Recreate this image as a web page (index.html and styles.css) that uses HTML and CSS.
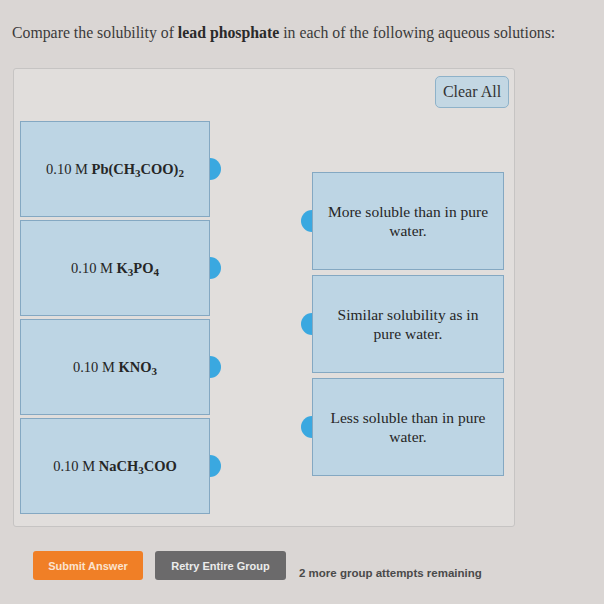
FILE: index.html
```html
<!DOCTYPE html>
<html>
<head>
<meta charset="utf-8">
<link rel="stylesheet" href="styles.css">
</head>
<body>
<div class="page">
  <p class="prompt">Compare the solubility of <b>lead phosphate</b> in each of the following aqueous solutions:</p>
  <div class="panel">
    <div class="toolbar"><button class="clear">Clear All</button></div>
    <div class="columns">
      <div class="col left">
        <div class="item"><span>0.10 M <b>Pb(CH<sub>3</sub>COO)<sub>2</sub></b></span><i class="tab tab-r"></i></div>
        <div class="item"><span>0.10 M <b>K<sub>3</sub>PO<sub>4</sub></b></span><i class="tab tab-r"></i></div>
        <div class="item"><span>0.10 M <b>KNO<sub>3</sub></b></span><i class="tab tab-r"></i></div>
        <div class="item"><span>0.10 M <b>NaCH<sub>3</sub>COO</b></span><i class="tab tab-r"></i></div>
      </div>
      <div class="col right">
        <div class="target"><i class="tab tab-l"></i><span>More soluble than in pure water.</span></div>
        <div class="target"><i class="tab tab-l"></i><span>Similar solubility as in pure water.</span></div>
        <div class="target"><i class="tab tab-l"></i><span>Less soluble than in pure water.</span></div>
      </div>
    </div>
  </div>
  <div class="actions">
    <button class="btn submit">Submit Answer</button>
    <button class="btn retry">Retry Entire Group</button>
    <span class="note">2 more group attempts remaining</span>
  </div>
</div>
</body>
</html>
```
FILE: styles.css
```css
html, body {
  margin: 0;
  padding: 0;
  background: #dad6d4;
}
.page {
  width: 604px;
  height: 604px;
  overflow: hidden;
  font-family: "Liberation Serif", "Times New Roman", serif;
  color: #333;
}
.prompt {
  margin: 0;
  padding: 23px 0 0 12px;
  font-size: 15.8px;
  line-height: 20px;
  color: #3a3a3a;
}
.prompt b { color: #2a2a2a; }
.panel {
  margin: 25px 0 0 13px;
  width: 502px;
  height: 459px;
  border: 1px solid #c6c4c3;
  border-radius: 3px;
  background: #e1dedc;
  box-sizing: border-box;
}
.toolbar {
  display: flex;
  justify-content: flex-end;
  padding: 7px 5px 0 0;
}
.clear {
  width: 74px;
  height: 32px;
  background: #c3d7e3;
  border: 1px solid #8eb2c9;
  border-radius: 5px;
  font-family: "Liberation Serif", "Times New Roman", serif;
  font-size: 16px;
  color: #333;
  padding: 0;
}
.columns {
  display: flex;
  padding: 13px 0 0 6px;
}
.col {
  display: flex;
  flex-direction: column;
  gap: 3px;
}
.left { width: 190px; }
.right {
  width: 192px;
  margin: 51px 0 0 102px;
  gap: 5px;
}
.item, .target {
  position: relative;
  background: #bdd5e4;
  border: 1px solid #84a8c2;
  box-sizing: border-box;
  display: flex;
  align-items: center;
  justify-content: center;
  text-align: center;
  color: #262626;
}
.item {
  height: 96px;
  font-size: 14.5px;
}
.item b { font-weight: bold; }
.item sub {
  font-size: 11px;
  vertical-align: -3px;
  line-height: 0;
}
.target {
  height: 98px;
  font-size: 15.5px;
  line-height: 19px;
  padding: 0 14px;
}
.tab {
  position: absolute;
  top: 50%;
  width: 11px;
  height: 22px;
  margin-top: -11px;
  background: #3aa8e0;
}
.tab-r {
  left: 100%;
  margin-left: 1px;
  border-radius: 0 11px 11px 0;
}
.tab-l {
  right: 100%;
  margin-right: 1px;
  border-radius: 11px 0 0 11px;
}
.actions {
  display: flex;
  align-items: center;
  padding: 24px 0 0 33px;
}
.btn {
  border: 0;
  border-radius: 3px;
  color: #fff;
  font-family: "Liberation Sans", Arial, sans-serif;
  font-weight: bold;
  font-size: 11px;
  padding: 0;
}
.submit {
  width: 110px;
  height: 29px;
  background: #f07f26;
  color: #fbe3cf;
}
.retry {
  width: 131px;
  height: 29px;
  margin-left: 12px;
  background: #6b6a6b;
  color: #ececec;
  font-size: 11px;
}
.note {
  margin-left: 13px;
  padding-top: 14px;
  font-family: "Liberation Sans", Arial, sans-serif;
  font-size: 11.5px;
  font-weight: bold;
  color: #4a4a4a;
}
```
